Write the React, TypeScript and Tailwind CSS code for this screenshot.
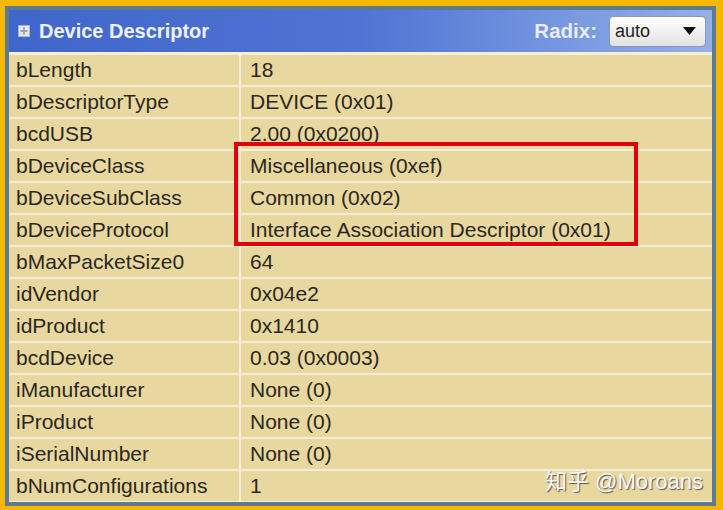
import React from "react";

const rows: [string, string][] = [
  ["bLength", "18"],
  ["bDescriptorType", "DEVICE (0x01)"],
  ["bcdUSB", "2.00 (0x0200)"],
  ["bDeviceClass", "Miscellaneous (0xef)"],
  ["bDeviceSubClass", "Common (0x02)"],
  ["bDeviceProtocol", "Interface Association Descriptor (0x01)"],
  ["bMaxPacketSize0", "64"],
  ["idVendor", "0x04e2"],
  ["idProduct", "0x1410"],
  ["bcdDevice", "0.03 (0x0003)"],
  ["iManufacturer", "None (0)"],
  ["iProduct", "None (0)"],
  ["iSerialNumber", "None (0)"],
  ["bNumConfigurations", "1"],
];

export default function App() {
  return (
    <div
      className="relative w-[723px] h-[510px] bg-[#f5b700] pt-[6px] pl-[5px] pr-[7px] pb-[4px]"
      style={{ fontFamily: '"Liberation Sans", Arial, sans-serif' }}
    >
      <div className="w-full h-full border-[4px] border-[#5d7b8e] bg-[#f6efd6] flex flex-col">
        <div className="h-[42px] shrink-0 flex items-center bg-gradient-to-r from-[#4166cb] via-[#4f74d3] to-[#95b0e9] pl-[9px] pr-[6px]">
          <div className="w-[12px] h-[12px] bg-[#e4e8f2] border border-[#aab4cc] flex items-center justify-center">
            <svg width="8" height="8" viewBox="0 0 8 8">
              <rect x="3" y="0.5" width="2" height="7" fill="#9aa3b8" />
              <rect x="0.5" y="3" width="7" height="2" fill="#9aa3b8" />
            </svg>
          </div>
          <span className="ml-[9px] text-[20px] font-bold text-[#eef2fb]">Device Descriptor</span>
          <span className="ml-auto text-[20.5px] font-bold text-[#e8eefb]">Radix:</span>
          <div className="ml-[12px] w-[97px] h-[31px] rounded-[4px] border border-[#8c98b0] bg-gradient-to-b from-[#ffffff] to-[#e2e2e2] flex items-center pl-[5px] pr-[9px]">
            <span className="text-[18px] text-[#222]">auto</span>
            <svg className="ml-auto" width="13" height="8" viewBox="0 0 13 8">
              <polygon points="0,0 13,0 6.5,8" fill="#111" />
            </svg>
          </div>
        </div>
        <div className="h-[3px] shrink-0 bg-[#f6efd6]" />
        <div className="flex flex-col gap-[2px]">
          {rows.map(([k, v]) => (
            <div key={k} className="h-[30px] flex gap-[2px]">
              <div className="w-[230px] shrink-0 bg-[#e9d7a0] flex items-center pl-[7px] text-[21px] text-[#2a281c]">
                {k}
              </div>
              <div className="flex-1 bg-[#e9d7a0] flex items-center pl-[9px] text-[21px] text-[#2a281c]">
                {v}
              </div>
            </div>
          ))}
        </div>
      </div>
      <div className="absolute left-[234px] top-[142px] w-[404px] h-[104px] border-[4px] border-[#e0000a]" />
      <div
        className="absolute left-[545px] top-[465px] text-[22px] text-[#f8f8f8]"
        style={{ fontFamily: '"Liberation Sans", "Noto Sans CJK SC", sans-serif', textShadow: "1px 1px 1px #555" }}
      >
        知乎 @Moroans
      </div>
    </div>
  );
}
